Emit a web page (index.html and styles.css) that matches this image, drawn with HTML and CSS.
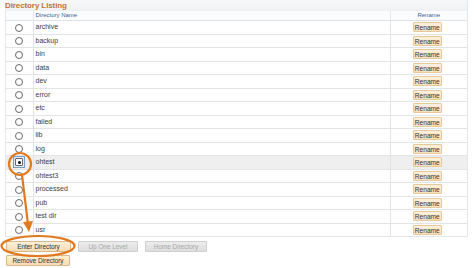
FILE: index.html
```html
<!DOCTYPE html>
<html>
<head>
<meta charset="utf-8">
<link rel="stylesheet" href="styles.css">
</head>
<body>
<div class="page">
  <div class="panel">
    <div class="title">Directory Listing</div>
    <table class="listing">
      <colgroup><col class="c-radio"><col class="c-name"><col class="c-ren"></colgroup>
      <thead>
        <tr><th></th><th class="h-name">Directory Name</th><th class="h-ren">Rename</th></tr>
      </thead>
      <tbody>
        <tr><td class="rad"><span class="radio"></span></td><td>archive</td><td class="ren"><span class="rbtn">Rename</span></td></tr>
        <tr><td class="rad"><span class="radio"></span></td><td>backup</td><td class="ren"><span class="rbtn">Rename</span></td></tr>
        <tr><td class="rad"><span class="radio"></span></td><td>bin</td><td class="ren"><span class="rbtn">Rename</span></td></tr>
        <tr><td class="rad"><span class="radio"></span></td><td>data</td><td class="ren"><span class="rbtn">Rename</span></td></tr>
        <tr><td class="rad"><span class="radio"></span></td><td>dev</td><td class="ren"><span class="rbtn">Rename</span></td></tr>
        <tr><td class="rad"><span class="radio"></span></td><td>error</td><td class="ren"><span class="rbtn">Rename</span></td></tr>
        <tr><td class="rad"><span class="radio"></span></td><td>etc</td><td class="ren"><span class="rbtn">Rename</span></td></tr>
        <tr><td class="rad"><span class="radio"></span></td><td>failed</td><td class="ren"><span class="rbtn">Rename</span></td></tr>
        <tr><td class="rad"><span class="radio"></span></td><td>lib</td><td class="ren"><span class="rbtn">Rename</span></td></tr>
        <tr><td class="rad"><span class="radio"></span></td><td>log</td><td class="ren"><span class="rbtn">Rename</span></td></tr>
        <tr class="sel"><td class="rad"><span class="focus"><span class="radio on"></span></span></td><td>ohtest</td><td class="ren"><span class="rbtn">Rename</span></td></tr>
        <tr><td class="rad"><span class="radio"></span></td><td>ohtest3</td><td class="ren"><span class="rbtn">Rename</span></td></tr>
        <tr><td class="rad"><span class="radio"></span></td><td>processed</td><td class="ren"><span class="rbtn">Rename</span></td></tr>
        <tr><td class="rad"><span class="radio"></span></td><td>pub</td><td class="ren"><span class="rbtn">Rename</span></td></tr>
        <tr><td class="rad"><span class="radio"></span></td><td>test dir</td><td class="ren"><span class="rbtn">Rename</span></td></tr>
        <tr><td class="rad"><span class="radio"></span></td><td>usr</td><td class="ren"><span class="rbtn">Rename</span></td></tr>
      </tbody>
    </table>
  </div>
  <div class="actions">
    <span class="btn active w-enter">Enter Directory</span>
    <span class="btn disabled w-up">Up One Level</span>
    <span class="btn disabled w-home">Home Directory</span>
  </div>
  <div class="actions second">
    <span class="btn active w-remove">Remove Directory</span>
  </div>
  <svg class="annot" width="474" height="268" viewBox="0 0 474 268">
    <circle cx="20" cy="164" r="11" fill="none" stroke="#e2791f" stroke-width="2.2"/>
    <line x1="22" y1="175" x2="28" y2="224" stroke="#e2791f" stroke-width="2.2"/>
    <polygon points="23,222 33,221 29,232" fill="#e2791f"/>
    <ellipse cx="38" cy="246" rx="36.5" ry="10" fill="none" stroke="#e2791f" stroke-width="2.2"/>
  </svg>
</div>
</body>
</html>
```
FILE: styles.css
```css
html, body {
  margin: 0;
  padding: 0;
  background: #ffffff;
}
.page {
  position: relative;
  width: 474px;
  height: 268px;
  overflow: hidden;
  font-family: "Liberation Sans", Arial, sans-serif;
  color: #3a3a3a;
}
.panel {
  margin-left: 5px;
  width: 463px;
  border-left: 1px solid #e4e6e8;
  border-right: 1px solid #e4e6e8;
  box-sizing: border-box;
}
.title {
  height: 11px;
  line-height: 11px;
  font-size: 8px;
  font-weight: bold;
  letter-spacing: -0.1px;
  color: #c27430;
  margin-left: -1px;
  background: linear-gradient(#f7f8fa, #eef1f4);
}
.listing {
  width: 100%;
  border-collapse: collapse;
  table-layout: fixed;
  font-size: 7px;
}
.c-radio { width: 27px; }
.c-ren { width: 77px; }
.listing th {
  height: 9px;
  padding: 0;
  font-size: 6px;
  font-weight: normal;
  color: #3d5f94;
  line-height: 9px;
  border-bottom: 1px solid #dfe2e5;
  background: #fbfcfd;
}
.listing th.h-name { text-align: left; padding-left: 2px; border-left: 1px solid #e4e6e8; }
.listing th.h-ren { text-align: center; border-left: 1px solid #e4e6e8; }
.listing td {
  height: 12.5px;
  padding: 0 0 0 2px;
  border-bottom: 1px solid #e2e4e6;
  line-height: 12px;
  color: #3c3c3c;
  vertical-align: middle;
}
.listing td.rad {
  padding: 0;
  text-align: center;
  border-right: 1px solid #e2e4e6;
}
.listing td.ren {
  padding: 0;
  text-align: center;
  border-left: 1px solid #e2e4e6;
}
.listing tr.sel td { background: #efefef; }
.radio {
  display: inline-block;
  width: 6px;
  height: 6px;
  border: 1px solid #6b6b6b;
  border-radius: 50%;
  background: #fff;
  vertical-align: middle;
  margin-top: 1px;
  position: relative;
}
.radio.on::after {
  content: "";
  position: absolute;
  left: 1.5px;
  top: 1.5px;
  width: 3px;
  height: 3px;
  border-radius: 50%;
  background: #111;
}
.focus {
  display: inline-block;
  padding: 1px;
  border: 1px solid #7a9cc4;
  background: #dfe8f3;
  line-height: 0;
  vertical-align: middle;
}
.focus .radio { margin-top: 0; border-radius: 1px; }
.rbtn {
  display: inline-block;
  width: 29px;
  height: 10px;
  line-height: 10px;
  font-size: 6.6px;
  color: #333;
  background: linear-gradient(#fdf1dd, #f8e0bb);
  border: 1px solid #e6c89c;
  border-radius: 1px;
  overflow: hidden;
  white-space: nowrap;
  text-align: right;
  padding-right: 1px;
  box-sizing: border-box;
  vertical-align: middle;
  margin-left: -3px;
}
.actions {
  display: flex;
  gap: 7px;
  margin-top: 4px;
  padding-left: 6px;
}
.actions.second { margin-top: 3px; }
.btn {
  display: inline-block;
  height: 11px;
  line-height: 10px;
  font-size: 6.4px;
  text-align: center;
  box-sizing: border-box;
  border-radius: 1px;
}
.btn.active {
  background: linear-gradient(#fdefd8, #f6dcb4);
  border: 1px solid #d9b98c;
  color: #2f2f2f;
}
.btn.disabled {
  background: linear-gradient(#ececec, #dedede);
  border: 1px solid #cfcfcf;
  color: #a8a8a8;
}
.w-enter { width: 65px; }
.w-up { width: 60px; }
.w-home { width: 62px; }
.w-remove { width: 64px; }
.annot {
  position: absolute;
  left: 0;
  top: 0;
  pointer-events: none;
}
```
